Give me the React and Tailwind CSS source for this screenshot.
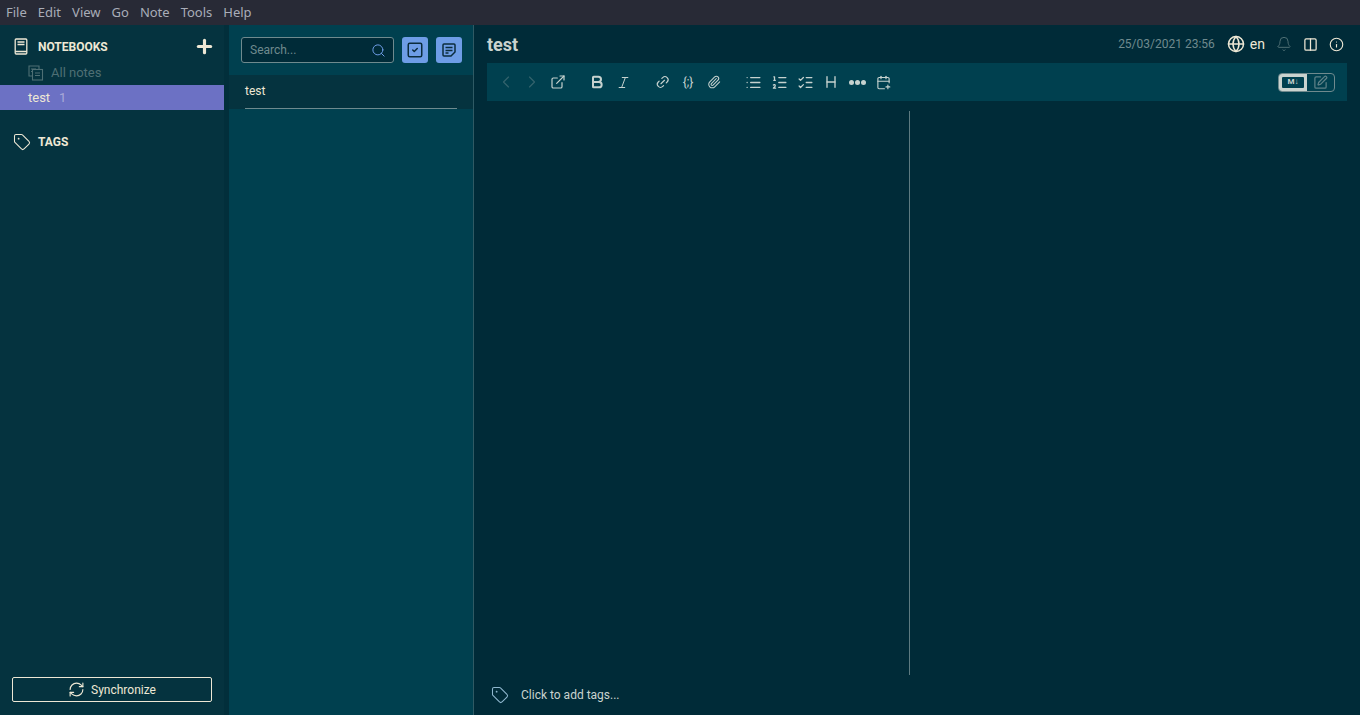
import React from "react";
import {
  ChevronLeft,
  ChevronRight,
  ExternalLink,
  Bold,
  Italic,
  Link2,
  Paperclip,
  List,
  ListOrdered,
  ListChecks,
  Heading,
  CalendarPlus,
  Bell,
  Columns2,
  Info,
  Search,
  SquareCheck,
  RefreshCw,
  Globe,
  SquarePen,
  Plus,
  Tag,
} from "lucide-react";

const MENU = ["File", "Edit", "View", "Go", "Note", "Tools", "Help"];

const NotebookIcon = () => (
  <svg width="14" height="17" viewBox="0 0 14 17" fill="none" stroke="#eee8d5" strokeWidth="1.3">
    <rect x="1.2" y="1" width="11.6" height="15" rx="1" />
    <path d="M3.5 4h7M3.5 6.5h7M1.2 13.5h11.6" />
  </svg>
);

const NotesIcon = () => (
  <svg width="16" height="16" viewBox="0 0 16 16" fill="none" stroke="#4e6f74" strokeWidth="1.1">
    <path d="M11 4V1H1v10h3" />
    <rect x="4.5" y="4.5" width="10" height="10.5" />
    <path d="M3 4h5M3 6.5h1.5M7 8h5M7 10.5h5" />
  </svg>
);

const NoteIcon = () => (
  <svg width="14" height="14" viewBox="0 0 14 14" fill="none" stroke="#0b2c3c" strokeWidth="1.5" strokeLinejoin="round">
    <path d="M1 2a1 1 0 0 1 1-1h10a1 1 0 0 1 1 1v7l-4 4H2a1 1 0 0 1-1-1z" />
    <path d="M3.5 4.5h7M3.5 7.5h7M3.5 10h3" />
  </svg>
);

const ToolBtn = ({ icon: Icon, size = 16, stroke = 1.8, className = "" }) => (
  <span className={`flex h-[26px] w-[26px] items-center justify-center ${className}`}>
    <Icon size={size} strokeWidth={stroke} />
  </span>
);

const App = () => {
  return (
    <div className="flex h-screen w-full flex-col overflow-hidden bg-[#002b38] font-['Roboto',sans-serif] text-[#eee8d5]">
      <div className="flex h-[25px] shrink-0 items-center gap-[11px] bg-[#282a36] pl-[6px] font-['Noto_Sans',sans-serif] text-[13px] text-[#a9adb8]">
        {MENU.map((m) => (
          <span key={m}>{m}</span>
        ))}
      </div>

      <div className="flex min-h-0 flex-1">
        {/* sidebar */}
        <div className="flex w-[224px] shrink-0 flex-col bg-[#05333f]">
          <div className="flex h-[35px] items-center pl-[14px] pr-[9px] pt-[8px]">
            <NotebookIcon />
            <span className="ml-[10px] flex-1 text-[12px] font-bold">NOTEBOOKS</span>
            <Plus size={21} strokeWidth={3.6} />
          </div>
          <div className="flex h-[25px] items-center pl-[28px] text-[13px] text-[#4e6f74]">
            <NotesIcon />
            <span className="ml-[7px]">All notes</span>
          </div>
          <div className="flex h-[25px] items-center bg-[#6c71c4] pl-[28px] text-[13px]">
            <span>test</span>
            <span className="ml-[9px] text-[#a9a9d8]">1</span>
          </div>
          <div className="mt-[19px] flex h-[25px] items-center pl-[13px]">
            <Tag size={18} strokeWidth={1.4} className="rotate-[0deg]" />
            <span className="ml-[7px] text-[12px] font-bold">TAGS</span>
          </div>
          <div className="mt-auto px-[12px] pb-[13px]">
            <div className="flex h-[25px] items-center justify-center gap-[6px] rounded-[2px] border border-[#eee8d5] text-[12px]">
              <RefreshCw size={17} strokeWidth={1.6} />
              <span>Synchronize</span>
            </div>
          </div>
        </div>

        <div className="w-[5px] shrink-0 bg-[#022f3b]" />

        {/* note list */}
        <div className="flex w-[244px] shrink-0 flex-col bg-[#00404f]">
          <div className="flex h-[50px] shrink-0 items-center pl-[12px]">
            <div className="flex h-[26px] w-[153px] items-center justify-between rounded-[3px] border border-[#6f8a8e] bg-[#002b38] pl-[8px] pr-[7px] text-[12px] text-[#6f8a8e]">
              <span>Search...</span>
              <Search size={15} strokeWidth={1.6} className="text-[#6e9de6]" />
            </div>
            <span className="ml-[8px] flex h-[26px] w-[26px] items-center justify-center rounded-[3px] bg-[#6e9de6] text-[#0b2c3c]">
              <SquareCheck size={18} strokeWidth={2} />
            </span>
            <span className="ml-[8px] flex h-[26px] w-[26px] items-center justify-center rounded-[3px] bg-[#6e9de6]">
              <NoteIcon />
            </span>
          </div>
          <div className="h-[34px] shrink-0 bg-[#05333f] pl-[16px] pt-[9px] text-[12px] leading-[14px]">
            test
            <div className="mt-[10px] mr-[16px] h-px bg-[#6f8a8e]" />
          </div>
        </div>

        <div className="w-px shrink-0 bg-[#2f5a64]" />

        {/* editor */}
        <div className="flex min-w-0 flex-1 flex-col">
          <div className="flex h-[38px] shrink-0 items-center pl-[13px] pr-[16px]">
            <span className="flex-1 text-[18px] font-bold text-[#c9d3cf]">test</span>
            <span className="text-[12px] text-[#6f8a8e]">25/03/2021 23:56</span>
            <Globe size={18} strokeWidth={2} className="ml-[12px] text-[#eee8d5]" />
            <span className="ml-[5px] text-[14px]">en</span>
            <Bell size={16} strokeWidth={1.5} className="ml-[11px] text-[#4e6f74]" />
            <Columns2 size={15} strokeWidth={2} className="ml-[11px] text-[#eee8d5]" />
            <Info size={15} strokeWidth={1.8} className="ml-[11px] text-[#eee8d5]" />
          </div>

          <div className="mx-[13px] flex h-[38px] shrink-0 items-center bg-[#00404f] pl-[6px] pr-[0px] text-[#c6d2cf]">
            <ToolBtn icon={ChevronLeft} size={20} stroke={1.4} className="text-[#33626d]" />
            <ToolBtn icon={ChevronRight} size={20} stroke={1.4} className="text-[#33626d]" />
            <ToolBtn icon={ExternalLink} size={16} />
            <span className="w-[13px]" />
            <ToolBtn icon={Bold} size={16} stroke={3} />
            <ToolBtn icon={Italic} size={15} stroke={1.6} />
            <span className="w-[13px]" />
            <ToolBtn icon={Link2} size={15} className="-rotate-45" />
            <span className="flex h-[26px] w-[26px] items-center justify-center text-[12px]">{"{;}"}</span>
            <ToolBtn icon={Paperclip} size={14} />
            <span className="w-[13px]" />
            <ToolBtn icon={List} size={17} />
            <ToolBtn icon={ListOrdered} size={17} />
            <ToolBtn icon={ListChecks} size={17} />
            <ToolBtn icon={Heading} size={16} stroke={2} />
            <span className="flex h-[26px] w-[26px] items-center justify-center gap-[1px]">
              <span className="h-[5px] w-[5px] rounded-full bg-[#c6d2cf]" />
              <span className="h-[5px] w-[5px] rounded-full bg-[#c6d2cf]" />
              <span className="h-[5px] w-[5px] rounded-full bg-[#c6d2cf]" />
            </span>
            <ToolBtn icon={CalendarPlus} size={15} />
            <div className="ml-auto mr-[12px] flex h-[19px] w-[57px] overflow-hidden rounded-[4px] border border-[#6f8a8e]">
              <span className="flex w-[28px] items-center justify-center bg-[#c9d3cf]">
                <span className="flex h-[11px] w-[22px] items-center justify-center rounded-[1px] bg-[#00404f] text-[8px] font-bold leading-none text-[#c9d3cf]">
                  M↓
                </span>
              </span>
              <span className="flex flex-1 items-center justify-center text-[#5d8087]">
                <SquarePen size={15} strokeWidth={2} />
              </span>
            </div>
          </div>

          <div className="flex min-h-0 flex-1 pb-[0px] pt-[10px]">
            <div className="w-[436px] shrink-0 border-r border-[#5d7a80]" />
          </div>

          <div className="flex h-[40px] shrink-0 items-center pl-[17px] text-[12px] text-[#c9d3cf]">
            <Tag size={18} strokeWidth={1.4} className="text-[#8fb8cf]" />
            <span className="ml-[12px]">Click to add tags...</span>
          </div>
        </div>
      </div>
    </div>
  );
};

export default App;
